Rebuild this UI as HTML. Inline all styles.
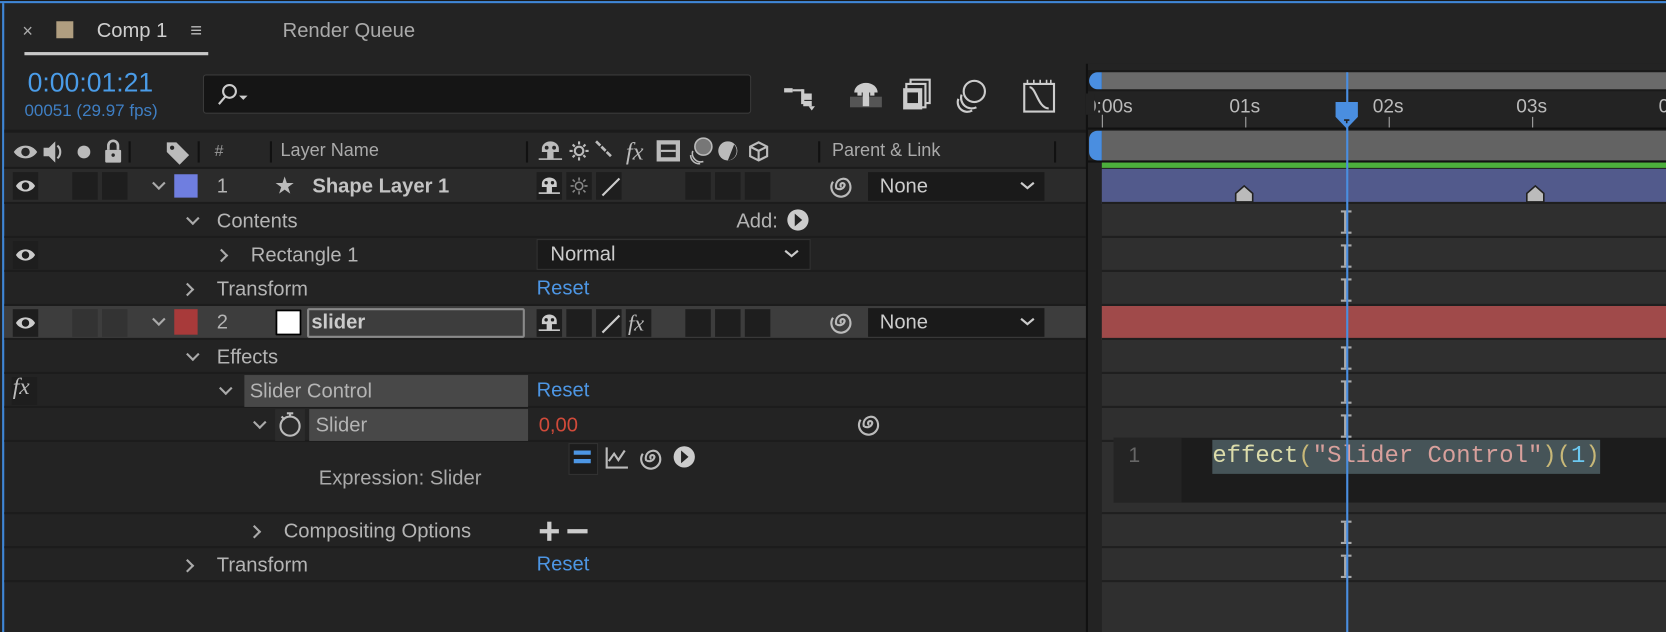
<!DOCTYPE html>
<html><head><meta charset="utf-8"><style>
html,body{margin:0;padding:0;background:#232323;overflow:hidden}
#w{position:absolute;left:0;top:0;width:1568px;height:595px;transform:scale(1.0625);transform-origin:0 0;background:#232323;font-family:"Liberation Sans",sans-serif;color:#b4b4b4;font-size:18px}
#w div,#w span{position:absolute;box-sizing:border-box}
.t{white-space:nowrap;line-height:1}
.row{left:4px;width:1018px;border-bottom:2px solid #1c1c1c}
.trow{left:1037px;width:531px;background:#2f2f2f;border-bottom:2px solid #1f1f1f}
.box{background:#1e1e1e;width:24px;height:26px}
.blue{color:#4d96e4}
.cd{width:9px;height:9px;border-right:2px solid #aaa;border-bottom:2px solid #aaa;transform:rotate(45deg)}
.cr{width:9px;height:9px;border-right:2px solid #aaa;border-bottom:2px solid #aaa;transform:rotate(-45deg)}
.ibeam{width:10px;height:22px;border-top:2px solid #aaa;border-bottom:2px solid #aaa}
.ibeam:after{content:"";position:absolute;left:3px;top:0;width:3px;height:18px;background:#aaa}
svg{position:absolute}
</style></head><body><div id="w">
<div style="left:0;top:0;width:1568px;height:3px;background:#1a1a1a;border-bottom:2px solid #3f86d6"></div>
<div style="left:2px;top:3px;width:2px;height:592px;background:#3f86d6"></div>
<div class="t" style="left:21px;top:21px;font-size:17px;color:#aaa">×</div>
<div style="left:53px;top:20px;width:16px;height:16px;background:#b09e80"></div>
<div class="t" style="left:91px;top:20px;font-size:19px;color:#cfcfcf">Comp 1</div>
<div class="t" style="left:179px;top:20px;font-size:19px;color:#bbb">≡</div>
<div style="left:23px;top:49px;width:173px;height:3px;background:#c8c8c8"></div>
<div class="t" style="left:266px;top:20px;font-size:19px;color:#aaa">Render Queue</div>
<div class="t" style="left:26px;top:66px;font-size:25px;color:#4a9ce8">0:00:01:21</div>
<div class="t" style="left:23px;top:97px;font-size:16px;color:#3f7fc4">00051 (29.97 fps)</div>
<div style="left:191px;top:70px;width:516px;height:37px;background:#151515;border:1px solid #3a3a3a;border-radius:3px"></div>
<svg style="left:203px;top:76px" width="34" height="26"><circle cx="13" cy="10" r="6" fill="none" stroke="#ccc" stroke-width="2"/><line x1="9" y1="15" x2="3" y2="22" stroke="#ccc" stroke-width="2"/><path d="M22 14h8l-4 4z" fill="#ccc"/></svg>
<svg style="left:735px;top:75px" width="34" height="30" fill="#ccc"><rect x="3" y="8" width="8" height="4"/><rect x="11" y="9" width="10" height="2"/><rect x="19" y="9" width="3" height="14"/><rect x="20" y="13" width="9" height="6"/><rect x="21" y="20" width="8" height="5"/><path d="M26 25h6l-3 4z"/></svg>
<svg style="left:798px;top:75px" width="34" height="28"><rect x="2" y="16" width="30" height="10" fill="#555"/><path d="M6 12a11 9 0 0 1 22 0z" fill="#ccc"/><rect x="14" y="11" width="6" height="14" fill="#ccc"/><rect x="9" y="12" width="4" height="3" fill="#ccc"/><rect x="21" y="12" width="4" height="3" fill="#ccc"/></svg>
<svg style="left:849px;top:73px" width="30" height="32" fill="none" stroke="#ccc" stroke-width="2"><rect x="8" y="2" width="18" height="22"/><rect x="4" y="6" width="18" height="22" fill="#232323"/><rect x="1" y="10" width="18" height="20" fill="#ccc" stroke="none"/><rect x="5" y="14" width="10" height="10" fill="#232323" stroke="none"/></svg>
<svg style="left:897px;top:73px" width="34" height="34" fill="none" stroke="#ccc" stroke-width="2"><circle cx="20" cy="13" r="10"/><path d="M8 16a10 10 0 0 0 14 12"/><path d="M5 20a9 9 0 0 0 13 11"/></svg>
<svg style="left:961px;top:73px" width="34" height="34" fill="none" stroke="#ccc" stroke-width="2"><rect x="3" y="6" width="28" height="26"/><path d="M8 9c6 0 8 20 18 20"/><path d="M6 2v4M12 2v4M18 2v4M24 2v4M28 2v4" stroke-width="1.5"/></svg>
<div style="left:4px;top:122px;width:1018px;height:3px;background:#1b1b1b"></div>
<div style="left:4px;top:125px;width:1018px;height:34px;background:#262626;border-bottom:2px solid #1b1b1b"></div>
<svg style="left:10px;top:130px" width="120" height="26" fill="#bbb"><path d="M3 13c5-8 17-8 22 0c-5 8-17 8-22 0z"/><circle cx="14" cy="13" r="4" fill="#262626"/><path d="M31 9h5l6-6v20l-6-6h-5z"/><path d="M44 7a8 8 0 0 1 0 12" fill="none" stroke="#bbb" stroke-width="2"/><circle cx="69" cy="13" r="6"/><rect x="89" y="11" width="15" height="12" rx="1"/><path d="M92 11v-4a4.5 4.5 0 0 1 9 0v4" fill="none" stroke="#bbb" stroke-width="2.5"/><circle cx="96.5" cy="16" r="1.6" fill="#262626"/></svg>
<div style="left:121px;top:133px;width:2px;height:20px;background:#111"></div>
<svg style="left:155px;top:130px" width="26" height="28"><path d="M2 4h9l12 12-9 9-12-12z" fill="#bbb"/><circle cx="7" cy="9" r="2" fill="#262626"/></svg>
<div style="left:186px;top:133px;width:2px;height:20px;background:#111"></div>
<div class="t" style="left:202px;top:135px;font-size:15px;color:#999">#</div>
<div style="left:254px;top:133px;width:2px;height:20px;background:#111"></div>
<div class="t" style="left:264px;top:133px;font-size:17px;color:#aaa">Layer Name</div>
<div style="left:495px;top:133px;width:2px;height:20px;background:#111"></div>
<svg style="left:504px;top:128px" width="225" height="30" fill="#bbb"><path d="M6 12a8 7 0 0 1 16 0v3h-16z"/><rect x="11" y="14" width="6" height="8"/><rect x="3" y="21" width="22" height="1.5"/><circle cx="10.5" cy="11" r="1.8" fill="#262626"/><circle cx="17.5" cy="11" r="1.8" fill="#262626"/>
<g stroke="#bbb" stroke-width="2"><circle cx="41" cy="14" r="4" fill="none"/><path d="M41 5v3M41 20v3M32 14h3M47 14h3M35 8l2 2M45 18l2 2M35 20l2-2M45 10l2-2"/><path d="M57 5l4 4M62 10l4 4M67 15l4 4" stroke-width="2.5"/></g>
<text x="85" y="22" font-family="Liberation Serif" font-style="italic" font-size="23" fill="#bbb">fx</text>
<rect x="114" y="4" width="22" height="20"/><rect x="118" y="8" width="14" height="12" fill="#262626"/><rect x="118" y="13" width="14" height="2"/>
<circle cx="158" cy="10" r="8" fill="#777" stroke="#bbb" stroke-width="1.5"/><path d="M148 14a8 8 0 0 0 10 10M146 18a8 8 0 0 0 9 8" fill="none" stroke="#bbb" stroke-width="1.5"/>
<circle cx="181" cy="14" r="9"/><path d="M181 23a9 9 0 0 0 6-15z" fill="#262626"/>
<path d="M210 6l8 4v9l-8 4-8-4v-9z M202 10l8 4 8-4M210 14v9" fill="none" stroke="#bbb" stroke-width="2"/></svg>
<div style="left:770px;top:133px;width:2px;height:20px;background:#111"></div>
<div class="t" style="left:783px;top:133px;font-size:17px;color:#aaa">Parent &amp; Link</div>
<div style="left:992px;top:133px;width:2px;height:20px;background:#111"></div>
<div style="left:1022px;top:60px;width:2px;height:535px;background:#111"></div>
<div class="row" style="top:159px;height:33px;background:#2b2b2b"></div>
<div class="row" style="top:192px;height:32px"></div>
<div class="row" style="top:224px;height:32px"></div>
<div class="row" style="top:256px;height:32px"></div>
<div class="row" style="top:288px;height:32px;background:#3d3d3d"></div>
<div class="row" style="top:320px;height:32px"></div>
<div class="row" style="top:352px;height:32px"></div>
<div class="row" style="top:384px;height:32px"></div>
<div class="row" style="top:416px;height:68px"></div>
<div class="row" style="top:484px;height:32px"></div>
<div class="row" style="top:516px;height:32px"></div>
<!-- row 1 -->
<div class="box" style="left:12px;top:162px"></div>
<svg style="left:12px;top:162px" width="24" height="26"><path d="M3 13c4-7 14-7 18 0c-4 7-14 7-18 0z" fill="#ccc"/><circle cx="12" cy="13" r="3.5" fill="#1e1e1e"/></svg>
<div class="box" style="left:68px;top:162px"></div><div class="box" style="left:96px;top:162px"></div>
<div class="cd" style="left:145px;top:168px"></div>
<div style="left:164px;top:164px;width:22px;height:22px;background:#6f7ee0"></div>
<div class="t" style="left:204px;top:166px;font-size:19px">1</div>
<div class="t" style="left:258px;top:164px;font-size:22px;color:#bbb">★</div>
<div class="t" style="left:294px;top:166px;font-size:19px;font-weight:bold;color:#c4c4c4">Shape Layer 1</div>
<div class="box" style="left:505px;top:162px"></div><div class="box" style="left:533px;top:162px"></div><div class="box" style="left:561px;top:162px"></div>
<svg style="left:505px;top:162px" width="84" height="26" fill="#ccc"><path d="M5 11a7 6 0 0 1 14 0v3h-14z"/><rect x="9.5" y="13" width="5" height="7"/><rect x="2" y="19" width="20" height="1.5"/><circle cx="9" cy="10" r="1.6" fill="#1e1e1e"/><circle cx="15" cy="10" r="1.6" fill="#1e1e1e"/><g stroke="#888" stroke-width="1.5"><circle cx="40" cy="13" r="3.5" fill="none"/><path d="M40 5v3M40 18v3M32 13h3M45 13h3M34 7l2 2M44 17l2 2M34 19l2-2M44 9l2-2"/></g><path d="M62 22l16-16" stroke="#ccc" stroke-width="2"/></svg>
<div class="box" style="left:645px;top:162px"></div><div class="box" style="left:673px;top:162px"></div><div class="box" style="left:701px;top:162px"></div>
<svg style="left:780px;top:163px" width="24" height="24" fill="none" stroke="#bbb" stroke-width="2"><path d="M12 13a2 2 0 1 1 3-2a5 5 0 0 1-8 3a7 7 0 0 1 10-8a9 9 0 1 1-13 2"/></svg>
<div style="left:817px;top:162px;width:166px;height:27px;background:#1a1a1a"></div>
<div class="t" style="left:828px;top:166px;font-size:19px;color:#ccc">None</div>
<svg style="left:960px;top:170px" width="14" height="10"><path d="M1 2l6 5 6-5" fill="none" stroke="#ccc" stroke-width="2"/></svg>
<!-- contents -->
<div class="cd" style="left:177px;top:201px"></div>
<div class="t" style="left:204px;top:199px;font-size:19px">Contents</div>
<div class="t" style="left:693px;top:199px;font-size:19px">Add:</div>
<svg style="left:740px;top:196px" width="24" height="24"><circle cx="11" cy="11" r="10" fill="#ccc"/><path d="M8 5l7 6-7 6z" fill="#232323"/></svg>
<!-- rectangle -->
<div class="box" style="left:12px;top:227px"></div>
<svg style="left:12px;top:227px" width="24" height="26"><path d="M3 13c4-7 14-7 18 0c-4 7-14 7-18 0z" fill="#ccc"/><circle cx="12" cy="13" r="3.5" fill="#1e1e1e"/></svg>
<div class="cr" style="left:204px;top:236px"></div>
<div class="t" style="left:236px;top:231px;font-size:19px">Rectangle 1</div>
<div style="left:505px;top:225px;width:258px;height:29px;background:#1a1a1a;border:1px solid #333"></div>
<div class="t" style="left:518px;top:230px;font-size:19px;color:#ccc">Normal</div>
<svg style="left:738px;top:234px" width="14" height="10"><path d="M1 2l6 5 6-5" fill="none" stroke="#ccc" stroke-width="2"/></svg>
<!-- transform 1 -->
<div class="cr" style="left:172px;top:268px"></div>
<div class="t" style="left:204px;top:263px;font-size:19px">Transform</div>
<div class="t blue" style="left:505px;top:262px;font-size:19px">Reset</div>
<!-- row 2 -->
<div class="box" style="left:12px;top:291px"></div>
<svg style="left:12px;top:291px" width="24" height="26"><path d="M3 13c4-7 14-7 18 0c-4 7-14 7-18 0z" fill="#ccc"/><circle cx="12" cy="13" r="3.5" fill="#1e1e1e"/></svg>
<div class="box" style="left:68px;top:291px;background:#333"></div><div class="box" style="left:96px;top:291px;background:#333"></div>
<div class="cd" style="left:145px;top:296px"></div>
<div style="left:164px;top:291px;width:22px;height:24px;background:#a83a3a"></div>
<div class="t" style="left:204px;top:294px;font-size:19px">2</div>
<div style="left:259px;top:291px;width:25px;height:25px;background:#fff;border:2px solid #000"></div>
<div style="left:289px;top:290px;width:205px;height:28px;background:#3d3d3d;border:2px solid #8a8a8a;border-radius:2px"></div>
<div class="t" style="left:293px;top:294px;font-size:19px;font-weight:bold;color:#ccc">slider</div>
<div class="box" style="left:505px;top:291px"></div><div class="box" style="left:533px;top:291px"></div><div class="box" style="left:561px;top:291px"></div><div class="box" style="left:589px;top:291px"></div>
<svg style="left:505px;top:291px" width="112" height="26" fill="#ccc"><path d="M5 11a7 6 0 0 1 14 0v3h-14z"/><rect x="9.5" y="13" width="5" height="7"/><rect x="2" y="19" width="20" height="1.5"/><circle cx="9" cy="10" r="1.6" fill="#1e1e1e"/><circle cx="15" cy="10" r="1.6" fill="#1e1e1e"/><path d="M62 22l16-16" stroke="#ccc" stroke-width="2"/><text x="86" y="20" font-family="Liberation Serif" font-style="italic" font-size="21" fill="#bbb">fx</text></svg>
<div class="box" style="left:645px;top:291px"></div><div class="box" style="left:673px;top:291px"></div><div class="box" style="left:701px;top:291px"></div>
<svg style="left:780px;top:291px" width="24" height="24" fill="none" stroke="#bbb" stroke-width="2"><path d="M12 13a2 2 0 1 1 3-2a5 5 0 0 1-8 3a7 7 0 0 1 10-8a9 9 0 1 1-13 2"/></svg>
<div style="left:817px;top:290px;width:166px;height:27px;background:#1a1a1a"></div>
<div class="t" style="left:828px;top:294px;font-size:19px;color:#ccc">None</div>
<svg style="left:960px;top:298px" width="14" height="10"><path d="M1 2l6 5 6-5" fill="none" stroke="#ccc" stroke-width="2"/></svg>
<!-- effects -->
<div class="cd" style="left:177px;top:329px"></div>
<div class="t" style="left:204px;top:327px;font-size:19px">Effects</div>
<div class="box" style="left:11px;top:355px;width:24px"></div>
<div class="t" style="left:12px;top:353px;font-family:'Liberation Serif',serif;font-style:italic;font-size:22px;color:#bbb">fx</div>
<div class="cd" style="left:208px;top:361px"></div>
<div style="left:230px;top:353px;width:267px;height:30px;background:#484848"></div>
<div class="t" style="left:235px;top:359px;font-size:19px">Slider Control</div>
<div class="t blue" style="left:505px;top:358px;font-size:19px">Reset</div>
<!-- slider -->
<div class="cd" style="left:240px;top:393px"></div>
<div style="left:259px;top:385px;width:28px;height:30px;background:#2b2b2b"></div>
<svg style="left:261px;top:386px" width="24" height="28" fill="none" stroke="#bbb" stroke-width="2"><circle cx="12" cy="15" r="9"/><path d="M9 3h6M12 3v3M4 6l3 3"/></svg>
<div style="left:291px;top:385px;width:206px;height:30px;background:#484848"></div>
<div class="t" style="left:297px;top:391px;font-size:19px">Slider</div>
<div class="t" style="left:507px;top:391px;font-size:19px;color:#d04a3a">0,00</div>
<svg style="left:806px;top:387px" width="24" height="24" fill="none" stroke="#bbb" stroke-width="2"><path d="M12 13a2 2 0 1 1 3-2a5 5 0 0 1-8 3a7 7 0 0 1 10-8a9 9 0 1 1-13 2"/></svg>
<!-- expression -->
<div style="left:535px;top:417px;width:28px;height:30px;background:#1c1c1c;border:1px solid #333"></div>
<div style="left:540px;top:424px;width:16px;height:4px;background:#4d96e4"></div>
<div style="left:540px;top:432px;width:16px;height:4px;background:#4d96e4"></div>
<svg style="left:568px;top:418px" width="92" height="26" fill="none" stroke="#bbb" stroke-width="2"><path d="M3 3v19h20M5 16l5-7 4 6 6-9"/><path d="M45 14a2 2 0 1 1 3-2a5 5 0 0 1-8 3a7 7 0 0 1 10-8a9 9 0 1 1-13 2"/><circle cx="76" cy="12" r="10" fill="#ccc" stroke="none"/><path d="M73 6l7 6-7 6z" fill="#232323" stroke="none"/></svg>
<div class="t" style="left:300px;top:441px;font-size:19px;color:#aaa">Expression: Slider</div>
<!-- compositing -->
<div class="cr" style="left:235px;top:496px"></div>
<div class="t" style="left:267px;top:491px;font-size:19px">Compositing Options</div>
<div style="left:508px;top:498px;width:18px;height:4px;background:#ccc"></div>
<div style="left:515px;top:491px;width:4px;height:18px;background:#ccc"></div>
<div style="left:534px;top:498px;width:19px;height:4px;background:#ccc"></div>
<!-- transform 2 -->
<div class="cr" style="left:172px;top:528px"></div>
<div class="t" style="left:204px;top:523px;font-size:19px">Transform</div>
<div class="t blue" style="left:505px;top:522px;font-size:19px">Reset</div>

<!-- TIMELINE -->
<div style="left:1024px;top:60px;width:544px;height:535px;background:#232323"></div>
<div style="left:1024px;top:66px;width:544px;height:20px;background:#1a1a1a"></div>
<div style="left:1037px;top:68px;width:531px;height:16px;background:#6a6a6a"></div>
<div style="left:1025px;top:68px;width:12px;height:16px;background:#4a8ee0;border-radius:8px 0 0 8px"></div>
<div style="left:1024px;top:86px;width:544px;height:36px;background:#232323;border-bottom:2px solid #111"></div>
<div class="t" style="left:1022px;top:91px;font-size:18px;color:#bbb">0:00s</div>
<div class="t" style="left:1157px;top:91px;font-size:18px;color:#bbb">01s</div>
<div class="t" style="left:1292px;top:91px;font-size:18px;color:#bbb">02s</div>
<div class="t" style="left:1427px;top:91px;font-size:18px;color:#bbb">03s</div>
<div class="t" style="left:1561px;top:91px;font-size:18px;color:#bbb">0</div>
<div style="left:1022px;top:88px;width:8px;height:20px;background:#232323"></div>
<div style="left:1037px;top:108px;width:1px;height:12px;background:#aaa"></div>
<div style="left:1172px;top:110px;width:1px;height:10px;background:#aaa"></div>
<div style="left:1307px;top:110px;width:1px;height:10px;background:#aaa"></div>
<div style="left:1442px;top:110px;width:1px;height:10px;background:#aaa"></div>
<div style="left:1037px;top:123px;width:531px;height:28px;background:#636363"></div>
<div style="left:1025px;top:123px;width:12px;height:28px;background:#4a8ee0;border-radius:8px 0 0 8px"></div>
<div style="left:1024px;top:151px;width:544px;height:2px;background:#111"></div>
<div style="left:1037px;top:153px;width:531px;height:5px;background:#4caf3c"></div>
<div class="trow" style="top:159px;height:33px;background:#525a8c"></div>
<div class="trow" style="top:192px;height:32px"></div>
<div class="trow" style="top:224px;height:32px"></div>
<div class="trow" style="top:256px;height:32px"></div>
<div class="trow" style="top:288px;height:32px;background:#a04a4a"></div>
<div class="trow" style="top:320px;height:32px"></div>
<div class="trow" style="top:352px;height:32px"></div>
<div class="trow" style="top:384px;height:32px"></div>
<div class="trow" style="top:416px;height:68px"></div>
<div class="trow" style="top:484px;height:32px"></div>
<div class="trow" style="top:516px;height:32px"></div>
<div style="left:1037px;top:548px;width:531px;height:47px;background:#2f2f2f"></div>
<svg style="left:1160px;top:173px" width="300" height="18"><path d="M3 17v-8l8-7 8 7v8z" fill="#bbb" stroke="#222" stroke-width="1.5"/><path d="M277 17v-8l8-7 8 7v8z" fill="#bbb" stroke="#222" stroke-width="1.5"/></svg>
<div style="left:1048px;top:412px;width:520px;height:61px;background:#1c1c1c"></div>
<div style="left:1048px;top:412px;width:64px;height:61px;background:#242424"></div>
<div class="t" style="left:1062px;top:419px;font-size:20px;color:#666">1</div>
<div style="left:1141px;top:414px;width:365px;height:32px;background:#465458"></div>
<div class="t" style="left:1141px;top:418px;font-family:'Liberation Mono',monospace;font-size:22.5px;color:#dcdcaa"><span style="position:static;color:#dcdcaa">effect</span><span style="position:static;color:#c8b878">(</span><span style="position:static;color:#d8a09c">"Slider Control"</span><span style="position:static;color:#c8b878">)(</span><span style="position:static;color:#6cc8f0">1</span><span style="position:static;color:#c8b878">)</span></div>
<div class="ibeam" style="left:1262px;top:198px"></div>
<div class="ibeam" style="left:1262px;top:230px"></div>
<div class="ibeam" style="left:1262px;top:262px"></div>
<div class="ibeam" style="left:1262px;top:326px"></div>
<div class="ibeam" style="left:1262px;top:358px"></div>
<div class="ibeam" style="left:1262px;top:390px"></div>
<div class="ibeam" style="left:1262px;top:490px"></div>
<div class="ibeam" style="left:1262px;top:522px"></div>
<div style="left:1266.5px;top:68px;width:2px;height:527px;background:#4a8ee0"></div>
<svg style="left:1256px;top:95px" width="24" height="28"><path d="M1 1h21v14l-10.5 11l-10.5-11z" fill="#4a8ee0"/><path d="M9 18h5M11.5 18v3" stroke="#222" stroke-width="1.5"/></svg>
</div></body></html>
